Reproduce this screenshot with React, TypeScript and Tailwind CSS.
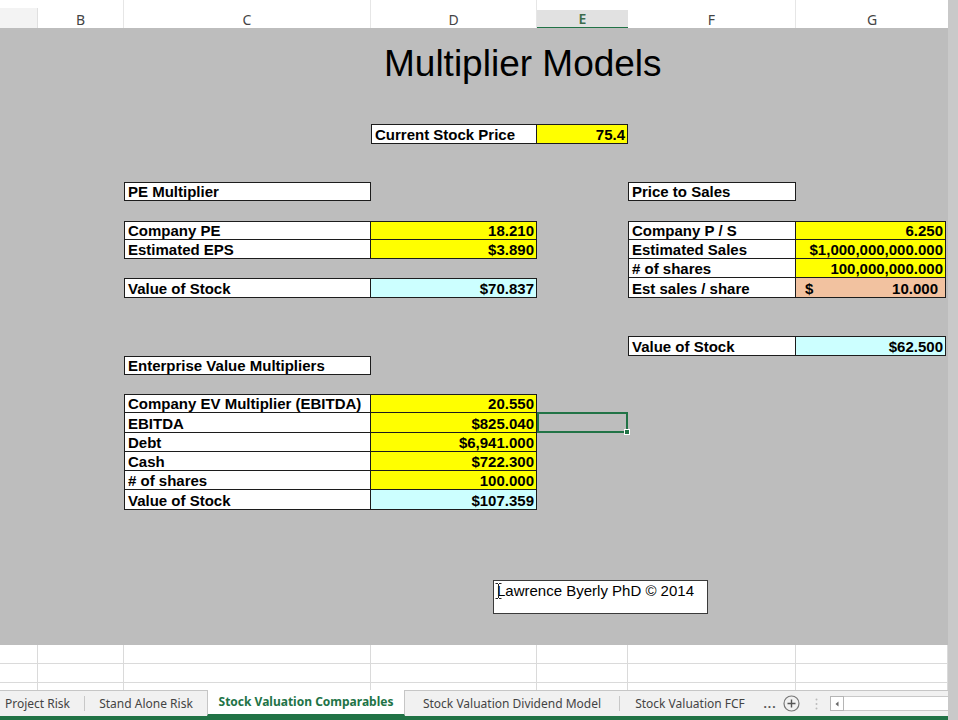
import React from "react";

const L =
  "flex items-end pl-[3px] border-[#1c1c1c] leading-[17px] whitespace-nowrap overflow-hidden bg-white";
const V =
  "flex items-end justify-end pr-[2px] border-[#1c1c1c] leading-[17px] whitespace-nowrap";

function Header() {
  return (
    <div className="h-[28px] grid grid-cols-[38px_86px_247px_166px_91px_168px_152px] bg-white font-['Noto_Sans',sans-serif] text-[14px] text-[#444] leading-[17px]">
      <div className="mt-[8px] bg-[#f3f3f3] border-r border-[#e0e0e0]" />
      <div className="flex items-end justify-center pb-[1px] border-r border-[#e6e6e6]">B</div>
      <div className="flex items-end justify-center pb-[1px] border-r border-[#e6e6e6]">C</div>
      <div className="flex items-end justify-center pb-[1px] border-r border-[#e6e6e6]">D</div>
      <div className="mt-[10px] flex items-end justify-center bg-[#e1e1e1] border-b-2 border-[#217346] text-[#3c6b4c] font-semibold">
        E
      </div>
      <div className="flex items-end justify-center pb-[1px] border-r border-[#e6e6e6]">F</div>
      <div className="flex items-end justify-center pb-[1px]">G</div>
    </div>
  );
}

function Sheet() {
  return (
    <div className="relative h-[617px] bg-[#bdbdbd] grid grid-cols-[38px_86px_247px_166px_91px_168px_152px] grid-rows-[repeat(32,19.28px)] text-[15px] font-bold text-black">
      <div className="col-start-4 col-span-4 row-start-2 row-span-2 pl-[13px] -mt-[2px] text-[37px] leading-[37px] font-normal whitespace-nowrap">
        Multiplier Models
      </div>

      <div className={`${L} col-start-4 row-start-6 border`}>Current Stock Price</div>
      <div className={`${V} col-start-5 row-start-6 border-y border-r bg-[#ffff00]`}>75.4</div>

      <div className={`${L} col-start-3 row-start-9 border`}>PE Multiplier</div>
      <div className={`${L} col-start-6 row-start-9 border`}>Price to Sales</div>

      <div className={`${L} col-start-3 row-start-11 border`}>Company PE</div>
      <div className={`${V} col-start-4 row-start-11 border-y border-r bg-[#ffff00]`}>18.210</div>
      <div className={`${L} col-start-3 row-start-12 border-x border-b`}>Estimated EPS</div>
      <div className={`${V} col-start-4 row-start-12 border-r border-b bg-[#ffff00]`}>$3.890</div>

      <div className={`${L} col-start-3 row-start-14 border`}>Value of Stock</div>
      <div className={`${V} col-start-4 row-start-14 border-y border-r bg-[#ccffff]`}>$70.837</div>

      <div className={`${L} col-start-6 row-start-11 border`}>Company P / S</div>
      <div className={`${V} col-start-7 row-start-11 border-y border-r bg-[#ffff00] mr-[2px]`}>6.250</div>
      <div className={`${L} col-start-6 row-start-12 border-x border-b`}>Estimated Sales</div>
      <div className={`${V} col-start-7 row-start-12 border-r border-b bg-[#ffff00] mr-[2px]`}>
        $1,000,000,000.000
      </div>
      <div className={`${L} col-start-6 row-start-13 border-x border-b`}># of shares</div>
      <div className={`${V} col-start-7 row-start-13 border-r border-b bg-[#ffff00] mr-[2px]`}>
        100,000,000.000
      </div>
      <div className={`${L} col-start-6 row-start-14 border-x border-b`}>Est sales / share</div>
      <div className="col-start-7 row-start-14 mr-[2px] flex items-end justify-between pl-[9px] pr-[7px] border-r border-b border-[#1c1c1c] bg-[#f2c2a0] leading-[17px]">
        <span>$</span>
        <span>10.000</span>
      </div>

      <div className={`${L} col-start-6 row-start-17 border`}>Value of Stock</div>
      <div className={`${V} col-start-7 row-start-17 border-y border-r bg-[#ccffff] mr-[2px]`}>$62.500</div>

      <div className={`${L} col-start-3 row-start-18 border`}>Enterprise Value Multipliers</div>

      <div className={`${L} col-start-3 row-start-20 border`}>Company EV Multiplier (EBITDA)</div>
      <div className={`${V} col-start-4 row-start-20 border-y border-r bg-[#ffff00]`}>20.550</div>
      <div className={`${L} col-start-3 row-start-21 border-x border-b`}>EBITDA</div>
      <div className={`${V} col-start-4 row-start-21 border-r border-b bg-[#ffff00]`}>$825.040</div>
      <div className={`${L} col-start-3 row-start-22 border-x border-b`}>Debt</div>
      <div className={`${V} col-start-4 row-start-22 border-r border-b bg-[#ffff00]`}>$6,941.000</div>
      <div className={`${L} col-start-3 row-start-23 border-x border-b`}>Cash</div>
      <div className={`${V} col-start-4 row-start-23 border-r border-b bg-[#ffff00]`}>$722.300</div>
      <div className={`${L} col-start-3 row-start-24 border-x border-b`}># of shares</div>
      <div className={`${V} col-start-4 row-start-24 border-r border-b bg-[#ffff00]`}>100.000</div>
      <div className={`${L} col-start-3 row-start-25 border-x border-b`}>Value of Stock</div>
      <div className={`${V} col-start-4 row-start-25 border-r border-b bg-[#ccffff]`}>$107.359</div>

      <div className="relative col-start-5 row-start-21 -mt-px border-2 border-[#217346]">
        <div className="absolute -right-[4px] -bottom-[4px] w-[6px] h-[6px] bg-[#217346] border border-white" />
      </div>

      <div className="absolute left-[493px] top-[552px] w-[215px] h-[34px] border border-[#3a3a3a] bg-white pl-[3px] pt-px text-[15px] font-normal leading-[17px] whitespace-nowrap">
        Lawrence Byerly PhD © 2014
        <svg className="absolute left-[1px] top-[2px]" width="7" height="16" viewBox="0 0 7 16">
          <path d="M0.5 0.5h2.5M4 0.5h2.5M3.5 1v14M0.5 15.5h2.5M4 15.5h2.5" stroke="#222" strokeWidth="1" fill="none" />
        </svg>
      </div>
    </div>
  );
}

function WhiteRows() {
  const cells = [0, 1, 2, 3, 4, 5, 6];
  return (
    <div className="h-[45px] grid grid-cols-[38px_86px_247px_166px_91px_168px_152px] grid-rows-[19px_19px_7px] bg-white">
      {cells.map((c) => (
        <div key={"a" + c} className="border-r border-b border-[#dadada]" />
      ))}
      {cells.map((c) => (
        <div key={"b" + c} className="border-r border-b border-[#dadada]" />
      ))}
      {cells.map((c) => (
        <div key={"c" + c} className="border-r border-[#dadada]" />
      ))}
    </div>
  );
}

function Tabs() {
  return (
    <div className="h-[26px] flex items-stretch bg-[#f1f1f1] border-t border-[#c6c6c6] font-['Noto_Sans',sans-serif] text-[12px] text-[#444] whitespace-nowrap">
      <div className="w-[84px] flex items-center pl-[5px]">Project Risk</div>
      <div className="w-px my-[5px] bg-[#c8c8c8]" />
      <div className="w-[122px] flex items-center justify-center">Stand Alone Risk</div>
      <div className="w-[198px] -mt-px flex items-center justify-center bg-white border-x border-[#c6c6c6] border-b-2 border-b-[#217346] font-bold text-[#217346]">
        Stock Valuation Comparables
      </div>
      <div className="w-[214px] flex items-center justify-center">Stock Valuation Dividend Model</div>
      <div className="w-px my-[5px] bg-[#c8c8c8]" />
      <div className="w-[140px] flex items-center justify-center">Stock Valuation FCF</div>
      <div className="w-[20px] flex items-center justify-center font-bold tracking-[1px] text-[#555]">...</div>
      <div className="w-[22px] flex items-center justify-center">
        <svg width="17" height="17" viewBox="0 0 17 17">
          <circle cx="8.5" cy="8.5" r="7.5" fill="none" stroke="#777" strokeWidth="1.2" />
          <path d="M8.5 4.5v8M4.5 8.5h8" stroke="#555" strokeWidth="1.4" />
        </svg>
      </div>
      <div className="w-[28px] flex items-center justify-center">
        <svg width="3" height="12" viewBox="0 0 3 12">
          <circle cx="1.5" cy="1.5" r="1" fill="#bbb" />
          <circle cx="1.5" cy="6" r="1" fill="#bbb" />
          <circle cx="1.5" cy="10.5" r="1" fill="#bbb" />
        </svg>
      </div>
      <div className="flex-1 flex items-center">
        <div className="w-[14px] h-[15px] flex items-center justify-center border border-[#b5b5b5] bg-white">
          <svg width="4" height="6" viewBox="0 0 4 6">
            <path d="M3.5 0.5v5L0.5 3z" fill="#666" />
          </svg>
        </div>
        <div className="flex-1 h-[15px] border-y border-[#c9c9c9] bg-white" />
      </div>
    </div>
  );
}

export default function App() {
  return (
    <div className="w-[958px] h-[720px] flex overflow-hidden bg-white font-['Liberation_Sans',Arial,sans-serif]">
      <div className="w-[948px] flex flex-col">
        <Header />
        <Sheet />
        <WhiteRows />
        <Tabs />
        <div className="h-[4px] bg-[#217346]" />
      </div>
      <div className="w-[10px] h-full bg-[#c9c9c9]" />
    </div>
  );
}
